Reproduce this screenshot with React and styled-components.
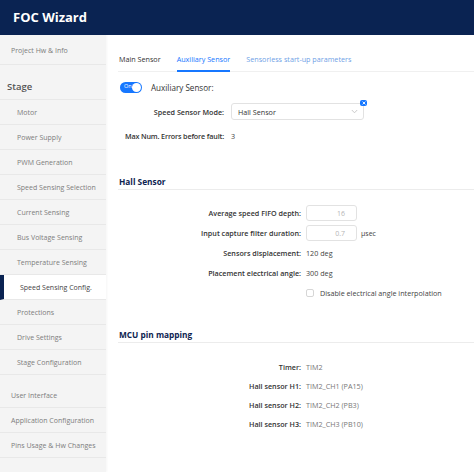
import React from "react";
import styled, { createGlobalStyle } from "styled-components";

const GlobalStyle = createGlobalStyle`
  html, body {
    margin: 0;
    padding: 0;
    background: #ffffff;
    font-family: "Open Sans", "Noto Sans", sans-serif;
  }
  * { box-sizing: border-box; }
`;

const stageItems = [
  "Motor",
  "Power Supply",
  "PWM Generation",
  "Speed Sensing Selection",
  "Current Sensing",
  "Bus Voltage Sensing",
  "Temperature Sensing",
  "Speed Sensing Config.",
  "Protections",
  "Drive Settings",
  "Stage Configuration",
];

const bottomItems = [
  "User Interface",
  "Application Configuration",
  "Pins Usage & Hw Changes",
];

const hallRows = [
  { label: "Average speed FIFO depth:", input: "16" },
  { label: "Input capture filter duration:", input: "0.7", unit: "µsec" },
  { label: "Sensors displacement:", value: "120 deg" },
  { label: "Placement electrical angle:", value: "300 deg" },
];

const pinRows = [
  { label: "Timer:", value: "TIM2" },
  { label: "Hall sensor H1:", value: "TIM2_CH1 (PA15)" },
  { label: "Hall sensor H2:", value: "TIM2_CH2 (PB3)" },
  { label: "Hall sensor H3:", value: "TIM2_CH3 (PB10)" },
];

const App = () => {
  return (
    <Page>
      <GlobalStyle />
      <Header>FOC Wizard</Header>
      <Body>
        <Sidebar>
          <NavItem $top>Project Hw &amp; Info</NavItem>
          <GroupTitle>Stage</GroupTitle>
          <Group>
            {stageItems.map((item) => (
              <NavItem key={item} $sub $active={item === "Speed Sensing Config."}>
                {item}
              </NavItem>
            ))}
          </Group>
          <Group>
            {bottomItems.map((item) => (
              <NavItem key={item}>{item}</NavItem>
            ))}
          </Group>
        </Sidebar>
        <Main>
          <Tabs>
            <Tab>Main Sensor</Tab>
            <Tab $active>Auxiliary Sensor</Tab>
            <Tab $faded>Sensorless start-up parameters</Tab>
          </Tabs>

          <ToggleRow>
            <Switch>
              <SwitchText>On</SwitchText>
              <Knob />
            </Switch>
            <ToggleLabel>Auxiliary Sensor:</ToggleLabel>
          </ToggleRow>

          <TopGrid>
            <Label>Speed Sensor Mode:</Label>
            <Select>
              Hall Sensor
              <svg width="7" height="5" viewBox="0 0 7 5">
                <path d="M0.8 1 L3.5 3.8 L6.2 1" fill="none" stroke="#c4c4c4" strokeWidth="0.9" />
              </svg>
              <Badge>
                <svg width="4" height="4" viewBox="0 0 4 4">
                  <path d="M0.6 0.6 L3.4 3.4 M3.4 0.6 L0.6 3.4" stroke="#fff" strokeWidth="0.9" />
                </svg>
              </Badge>
            </Select>
            <Label $tight>Max Num. Errors before fault:</Label>
            <Value>3</Value>
          </TopGrid>

          <SectionTitle $gap={32}>Hall Sensor</SectionTitle>
          <FormGrid>
            {hallRows.map((row) => (
              <React.Fragment key={row.label}>
                <Label>{row.label}</Label>
                {row.input ? (
                  <InputWrap>
                    <NumberBox>{row.input}</NumberBox>
                    {row.unit && <Unit>{row.unit}</Unit>}
                  </InputWrap>
                ) : (
                  <Value>{row.value}</Value>
                )}
              </React.Fragment>
            ))}
            <span />
            <CheckRow>
              <CheckBox />
              <CheckText>Disable electrical angle interpolation</CheckText>
            </CheckRow>
          </FormGrid>

          <SectionTitle $gap={28}>MCU pin mapping</SectionTitle>
          <PinGrid>
            {pinRows.map((row) => (
              <React.Fragment key={row.label}>
                <Label>{row.label}</Label>
                <Value $muted>{row.value}</Value>
              </React.Fragment>
            ))}
          </PinGrid>
        </Main>
      </Body>
    </Page>
  );
};

export default App;

const Page = styled.div`
  width: 474px;
  height: 472px;
  overflow: hidden;
  display: flex;
  flex-direction: column;
  background: #ffffff;
`;

const Header = styled.div`
  height: 35px;
  flex-shrink: 0;
  background: #0a2352;
  color: #ffffff;
  font-size: 13px;
  font-weight: 700;
  display: flex;
  align-items: center;
  padding-left: 13px;
  padding-bottom: 1px;
`;

const Body = styled.div`
  flex: 1;
  display: flex;
  min-height: 0;
`;

const Sidebar = styled.div`
  width: 106px;
  flex-shrink: 0;
  background: #f4f4f4;
  display: flex;
  flex-direction: column;
  box-shadow: 1px 0 2px rgba(0, 0, 0, 0.04);
`;

const Group = styled.div`
  display: flex;
  flex-direction: column;
  & + & {
    margin-top: 8px;
  }
`;

const GroupTitle = styled.div`
  height: 35px;
  display: flex;
  align-items: flex-end;
  padding: 0 0 6px 7px;
  font-size: 9.5px;
  font-weight: 600;
  color: #555;
  border-bottom: 1px solid #e8e8e8;
`;

const NavItem = styled.div`
  height: ${(p) => (p.$top ? "30px" : "25px")};
  display: flex;
  align-items: center;
  padding-top: ${(p) => (p.$top ? "1px" : "0")};
  font-size: 7px;
  color: ${(p) => (p.$active ? "#444" : "#7d7d7d")};
  background: ${(p) => (p.$active ? "#ffffff" : "transparent")};
  border-bottom: 1px solid #e8e8e8;
  border-left: ${(p) => (p.$active ? "4px solid #0a2352" : "none")};
  padding-left: ${(p) => (p.$active ? "16px" : p.$sub ? "17px" : "11px")};
  white-space: nowrap;
`;

const Main = styled.div`
  flex: 1;
  padding-left: 12px;
  display: flex;
  flex-direction: column;
  min-width: 0;
`;

const Tabs = styled.div`
  display: flex;
  gap: 16px;
  border-bottom: 1px solid #f0f0f0;
  padding-left: 1px;
`;

const Tab = styled.div`
  padding: 18px 0 5px;
  font-size: 7.2px;
  line-height: 12px;
  color: ${(p) => (p.$active ? "#1677ff" : p.$faded ? "#6f9fe6" : "#333")};
  border-bottom: 2px solid ${(p) => (p.$active ? "#1677ff" : "transparent")};
  margin-bottom: -1px;
  white-space: nowrap;
`;

const ToggleRow = styled.div`
  display: flex;
  align-items: center;
  gap: 9px;
  margin-top: 9px;
  padding-left: 2px;
  height: 12px;
`;

const Switch = styled.div`
  width: 22px;
  height: 11px;
  border-radius: 6px;
  background: #1677ff;
  display: flex;
  align-items: center;
  justify-content: space-between;
  padding: 0 1px 0 4px;
`;

const SwitchText = styled.span`
  font-size: 5.5px;
  color: #fff;
  line-height: 1;
`;

const Knob = styled.span`
  width: 9px;
  height: 9px;
  border-radius: 50%;
  background: #fff;
`;

const ToggleLabel = styled.span`
  font-size: 8.1px;
  color: #333;
`;

const TopGrid = styled.div`
  display: grid;
  grid-template-columns: 106px 133px;
  grid-auto-rows: 17px;
  column-gap: 7px;
  row-gap: 7px;
  margin-top: 10px;
  align-items: center;
`;

const Label = styled.div`
  text-align: right;
  font-size: 7.2px;
  font-weight: 600;
  color: #333;
  white-space: nowrap;
  letter-spacing: ${(p) => (p.$tight ? "-0.15px" : "0")};
`;

const Value = styled.div`
  font-size: 7.2px;
  color: ${(p) => (p.$muted ? "#777" : "#444")};
  white-space: nowrap;
`;

const Select = styled.div`
  position: relative;
  height: 17px;
  border: 1px solid #e2e2e2;
  border-radius: 3px;
  display: flex;
  align-items: center;
  justify-content: space-between;
  padding: 0 5px 0 6px;
  font-size: 7.2px;
  color: #333;
`;

const Badge = styled.span`
  position: absolute;
  top: -4px;
  right: -4px;
  width: 7px;
  height: 6px;
  border-radius: 2px;
  background: #1677ff;
  display: flex;
  align-items: center;
  justify-content: center;
`;

const SectionTitle = styled.div`
  margin-top: ${(p) => p.$gap}px;
  font-size: 8.3px;
  font-weight: 700;
  color: #0d2350;
  line-height: 12px;
  padding: 0 0 1px 1px;
  border-bottom: 1px solid #ececec;
`;

const FormGrid = styled.div`
  display: grid;
  grid-template-columns: 183px auto;
  grid-auto-rows: 16px;
  column-gap: 5px;
  row-gap: 4px;
  margin-top: 15px;
  align-items: center;
`;

const InputWrap = styled.div`
  display: flex;
  align-items: center;
  gap: 4px;
`;

const NumberBox = styled.div`
  width: 51px;
  height: 16px;
  border: 1px solid #e2e2e2;
  border-radius: 3px;
  display: flex;
  align-items: center;
  justify-content: flex-end;
  padding-right: 11px;
  font-size: 7px;
  color: #b5b5b5;
`;

const Unit = styled.span`
  font-size: 7px;
  color: #444;
`;

const CheckRow = styled.div`
  display: flex;
  align-items: center;
  gap: 6px;
  height: 12px;
`;

const CheckBox = styled.span`
  width: 8px;
  height: 8px;
  border: 1px solid #d6d6d6;
  border-radius: 2px;
  background: #fff;
`;

const CheckText = styled.span`
  font-size: 7.2px;
  color: #444;
  white-space: nowrap;
`;

const PinGrid = styled.div`
  display: grid;
  grid-template-columns: 183px auto;
  grid-auto-rows: 15px;
  column-gap: 5px;
  row-gap: 4.3px;
  margin-top: 16px;
  align-items: center;
`;
